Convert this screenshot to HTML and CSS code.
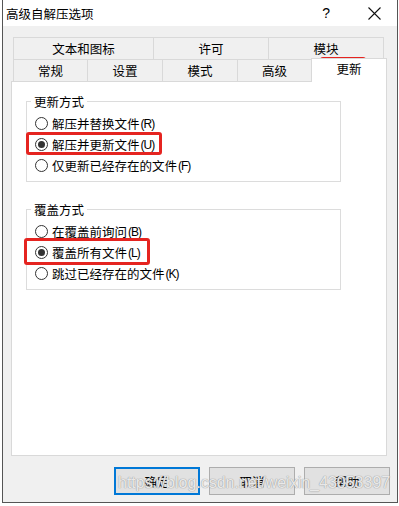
FILE: index.html
```html
<!DOCTYPE html>
<html lang="zh-CN">
<head>
    <meta charset="UTF-8">
    <title>高级自解压选项</title>
    <link rel="stylesheet" href="styles.css">
</head>
<body>
    <div class="window">
        <div class="titlebar">
            <span class="title">高级自解压选项</span>
            <span class="help">?</span>
            <svg class="close" width="13" height="13" viewBox="0 0 13 13">
                <path d="M0.5 0.5 L12.5 12.5 M12.5 0.5 L0.5 12.5" stroke="#111" stroke-width="1.1" fill="none"/>
            </svg>
        </div>

        <div class="dialog">
            <div class="tabs row1">
                <div class="tab w1">文本和图标</div>
                <div class="tab w2">许可</div>
                <div class="tab w2">模块</div>
            </div>
            <div class="tabs row2">
                <div class="tab s1">常规</div>
                <div class="tab s2">设置</div>
                <div class="tab s2">模式</div>
                <div class="tab s1">高级</div>
                <div class="tab s2 active">更新</div>
            </div>

            <div class="panel">
                <fieldset class="group">
                    <legend>更新方式</legend>
                    <label class="radio"><span class="dot"></span>解压并替换文件<span class="key">(R)</span></label>
                    <label class="radio"><span class="dot on"></span>解压并更新文件<span class="key">(U)</span></label>
                    <label class="radio"><span class="dot"></span>仅更新已经存在的文件<span class="key">(F)</span></label>
                </fieldset>

                <fieldset class="group second">
                    <legend>覆盖方式</legend>
                    <label class="radio"><span class="dot"></span>在覆盖前询问<span class="key">(B)</span></label>
                    <label class="radio"><span class="dot on"></span>覆盖所有文件<span class="key">(L)</span></label>
                    <label class="radio"><span class="dot"></span>跳过已经存在的文件<span class="key">(K)</span></label>
                </fieldset>
            </div>

            <div class="buttons">
                <button class="default">确定</button>
                <button>取消</button>
                <button>帮助</button>
            </div>
        </div>
    </div>

    <!-- annotations -->
    <div class="mark m1"></div>
    <div class="mark m2"></div>
    <div class="mark m3"></div>
    <div class="watermark">https://blog.csdn.net/weixin_43053397</div>
</body>
</html>
```

FILE: styles.css
```css
body {
    margin: 0;
    background-color: #fff;
    font-family: "Noto Sans CJK SC", "Microsoft YaHei", sans-serif;
    font-size: 12.5px;
    color: #000;
    position: relative;
    height: 506px;
    overflow: hidden;
}
.window {
    box-sizing: border-box;
    margin-left: 2px;
    width: 396px;
    height: 503px;
    border: 1px solid #555;
    border-top: none;
    display: flex;
    flex-direction: column;
}
.titlebar {
    height: 26px;
    background-color: #fff;
    display: flex;
    align-items: center;
    padding-left: 3px;
    font-size: 12.5px;
}
.title {
    flex: 1;
}
.help {
    font-family: "Liberation Sans", sans-serif;
    font-size: 14px;
    margin-right: 38px;
}
.close {
    margin-right: 16px;
}
.dialog {
    flex: 1;
    background-color: #f0f0f0;
    padding: 11px 0 0 8px;
}
.tabs {
    display: flex;
    margin-left: 2px;
}
.tab {
    box-sizing: border-box;
    border: 1px solid #d9d9d9;
    margin-left: -1px;
    text-align: center;
    font-size: 12.5px;
}
.tabs .tab:first-child {
    margin-left: 0;
}
.row1 .tab {
    height: 23px;
    line-height: 22px;
}
.w1 { width: 141px; }
.w2 { width: 116px; }
.row2 {
    margin-top: -1px;
    align-items: flex-end;
}
.row2 .tab {
    height: 22px;
    line-height: 21px;
    border-bottom: none;
}
.s1 { width: 75px; }
.s2 { width: 76px; }
.row2 .tab.active {
    height: 24px;
    line-height: 20px;
    margin-top: -2px;
    margin-bottom: -1px;
    background-color: #fff;
    position: relative;
    z-index: 1;
}
.panel {
    box-sizing: border-box;
    width: 376px;
    height: 375px;
    background-color: #fff;
    border: 1px solid #d9d9d9;
    padding-top: 11px;
}
.group {
    box-sizing: border-box;
    width: 315px;
    margin: 0 0 0 14px;
    border: 1px solid #dcdcdc;
    padding: 3px 0 5px 8px;
}
.group.second {
    margin-top: 19px;
}
.group legend {
    margin-left: -4px;
    padding: 0 3px;
    line-height: 17px;
}
.radio {
    display: flex;
    align-items: center;
    height: 21px;
}
.dot {
    box-sizing: border-box;
    width: 13px;
    height: 13px;
    border: 1px solid #333;
    border-radius: 50%;
    margin-right: 4px;
    display: flex;
    align-items: center;
    justify-content: center;
}
.dot.on::after {
    content: "";
    width: 7px;
    height: 7px;
    border-radius: 50%;
    background-color: #333;
}
.key {
    font-family: "Liberation Sans", sans-serif;
    font-size: 12px;
    letter-spacing: -1px;
    margin-left: 1px;
}
.buttons {
    display: flex;
    justify-content: flex-end;
    gap: 9px;
    margin-top: 11px;
    padding-right: 7px;
}
button {
    box-sizing: border-box;
    width: 86px;
    height: 28px;
    background-color: #e1e1e1;
    border: 1px solid #adadad;
    font-family: inherit;
    font-size: 12.5px;
    color: #000;
    padding: 0;
}
button.default {
    border: 2px solid #0078d7;
}
.mark {
    position: absolute;
    box-sizing: border-box;
    border: 3px solid #e52420;
    border-radius: 3px;
}
.m1 { left: 320px; top: 57px; width: 46px; height: 21px; }
.m2 { left: 26px; top: 132px; width: 136px; height: 23px; }
.m3 { left: 24px; top: 238px; width: 126px; height: 27px; }
.watermark {
    position: absolute;
    left: 118px;
    top: 474px;
    font-family: "Liberation Sans", sans-serif;
    font-size: 16px;
    color: rgba(255, 255, 255, 0.8);
    text-shadow: 0 0 1px #999, 0 0 1px #999;
}
```
